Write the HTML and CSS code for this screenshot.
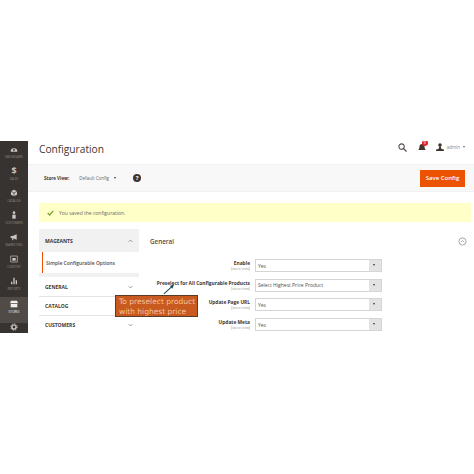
FILE: index.html
```html
<!DOCTYPE html>
<html lang="en">
<head>
    <meta charset="UTF-8">
    <title>Configuration</title>
    <link rel="stylesheet" href="styles.css">
</head>
<body>
    <div class="admin">
        <nav class="sidebar">
            <div class="nav-item">
                <svg viewBox="0 0 12 10"><path d="M1 9a5 5 0 0 1 10 0z" fill="#c9c6c3"/><circle cx="6" cy="6.5" r="1.4" fill="#373330"/></svg>
                <span>DASHBOARD</span>
            </div>
            <div class="nav-item">
                <span class="nav-glyph">$</span>
                <span>SALES</span>
            </div>
            <div class="nav-item">
                <svg viewBox="0 0 12 12"><path d="M6 1l4.5 2.5v5L6 11 1.500 8.500v-5z" fill="#c9c6c3"/><path d="M1.500 3.500L6 6l4.500-2.500M6 6v5" stroke="#373330" fill="none"/></svg>
                <span>CATALOG</span>
            </div>
            <div class="nav-item">
                <svg viewBox="0 0 12 12"><circle cx="6" cy="2.500" r="2" fill="#c9c6c3"/><path d="M3.500 5.500h5v6h-5z" fill="#c9c6c3"/></svg>
                <span>CUSTOMERS</span>
            </div>
            <div class="nav-item">
                <svg viewBox="0 0 12 12"><path d="M1 4.500h3L10 2v8L4 7.500H1z" fill="#c9c6c3"/><path d="M3 7.500h2V11H3.500z" fill="#c9c6c3"/></svg>
                <span>MARKETING</span>
            </div>
            <div class="nav-item">
                <svg viewBox="0 0 12 12"><path d="M1 1.500h10v9H1z" fill="none" stroke="#c9c6c3"/><path d="M3.500 4.500h5v4h-5z" fill="#c9c6c3"/></svg>
                <span>CONTENT</span>
            </div>
            <div class="nav-item">
                <svg viewBox="0 0 12 12"><path d="M1.500 7h2v4h-2zM5 1h2v10H5zM8.500 5h2v6h-2z" fill="#c9c6c3"/></svg>
                <span>REPORTS</span>
            </div>
            <div class="nav-item nav-active">
                <svg viewBox="0 0 12 10"><path d="M1.500 0h9L12 4H0z" fill="#f1efed"/><path d="M1 5h10v5H1z" fill="#f1efed"/></svg>
                <span>STORES</span>
            </div>
            <div class="nav-item nav-last">
                <svg viewBox="0 0 12 12"><circle cx="6" cy="6" r="3.200" fill="none" stroke="#c9c6c3" stroke-width="2.200"/><circle cx="6" cy="6" r="5" fill="none" stroke="#c9c6c3" stroke-width="1.400" stroke-dasharray="1.600 2.300"/></svg>
                <span>SYSTEM</span>
            </div>
        </nav>

        <main class="main">
            <header class="page-head">
                <h1>Configuration</h1>
                <div class="head-tools">
                    <svg class="icon-search" viewBox="0 0 10 10"><circle cx="4" cy="4" r="3" fill="none" stroke="#514b47" stroke-width="1.200"/><path d="M6.200 6.200L9.500 9.500" stroke="#514b47" stroke-width="1.400"/></svg>
                    <div class="bell">
                        <svg viewBox="0 0 8 8"><path d="M0 7q1.500-1 1.500-3.500a2.500 2.500 0 0 1 5 0Q6.500 6 8 7z" fill="#41362f"/></svg>
                        <span class="bell-count">9</span>
                    </div>
                    <div class="user">
                        <svg viewBox="0 0 8 8"><circle cx="4" cy="2" r="1.800" fill="#41362f"/><path d="M3 3.500h2V5.500l3 1.200V8H0V6.700l3-1.200z" fill="#41362f"/></svg>
                        <span>admin</span>
                        <i class="caret"></i>
                    </div>
                </div>
            </header>

            <div class="store-bar">
                <span class="store-label">Store View:</span>
                <span class="store-value">Default Config</span>
                <i class="caret caret-dark"></i>
                <span class="help">?</span>
                <button class="btn-save">Save Config</button>
            </div>

            <div class="notice">
                <svg viewBox="0 0 10 8"><path d="M1 4l2.800 2.800L9 1" fill="none" stroke="#79a22e" stroke-width="1.800"/></svg>
                <span>You saved the configuration.</span>
            </div>

            <div class="columns">
                <aside class="tabs">
                    <div class="tab tab-open">
                        <span>MAGEANTS</span>
                        <svg class="chev" viewBox="0 0 8 5"><path d="M1 4l3-3 3 3" fill="none" stroke="#6b6661"/></svg>
                    </div>
                    <div class="tab-link"><span>Simple Configurable Options</span></div>
                    <div class="tab tab-first">
                        <span>GENERAL</span>
                        <svg class="chev" viewBox="0 0 8 5"><path d="M1 1l3 3 3-3" fill="none" stroke="#6b6661"/></svg>
                    </div>
                    <div class="tab">
                        <span>CATALOG</span>
                        <svg class="chev" viewBox="0 0 8 5"><path d="M1 1l3 3 3-3" fill="none" stroke="#6b6661"/></svg>
                    </div>
                    <div class="tab">
                        <span>CUSTOMERS</span>
                        <svg class="chev" viewBox="0 0 8 5"><path d="M1 1l3 3 3-3" fill="none" stroke="#6b6661"/></svg>
                    </div>
                </aside>

                <section class="form">
                    <div class="form-head">
                        <h2>General</h2>
                        <svg viewBox="0 0 10 10"><circle cx="5" cy="5" r="4" fill="none" stroke="#8a8683" stroke-width=".8"/><path d="M3 6l2-2 2 2" fill="none" stroke="#8a8683" stroke-width=".8"/></svg>
                    </div>
                    <div class="field">
                        <div class="field-label"><b>Enable</b><small>[store view]</small></div>
                        <div class="select"><span>Yes</span><i class="select-btn"></i></div>
                    </div>
                    <div class="field">
                        <div class="field-label"><b>Preselect for All Configurable Products</b><small>[store view]</small></div>
                        <div class="select"><span>Select Highest Price Product</span><i class="select-btn"></i></div>
                    </div>
                    <div class="field">
                        <div class="field-label"><b>Update Page URL</b><small>[store view]</small></div>
                        <div class="select"><span>Yes</span><i class="select-btn"></i></div>
                    </div>
                    <div class="field">
                        <div class="field-label"><b>Update Meta</b><small>[store view]</small></div>
                        <div class="select"><span>Yes</span><i class="select-btn"></i></div>
                    </div>
                </section>
            </div>
        </main>

        <svg class="callout-arrow" viewBox="0 0 14 12"><path d="M1 11L11 2" stroke="#1d4a5c" stroke-width="1.200"/><path d="M13 0L8 2l3 3z" fill="#1d4a5c"/></svg>
        <div class="callout">To preselect product<br>with highest price</div>
    </div>
</body>
</html>
```

FILE: styles.css
```css
body {
    margin: 0;
    background: #fff;
    font-family: 'Open Sans', sans-serif;
    color: #41362f;
}

.admin {
    position: relative;
    display: flex;
    height: 192px;
    margin-top: 141px;
    overflow: hidden;
}

/* left menu */
.sidebar {
    flex: 0 0 28px;
    background: #373330;
    display: flex;
    flex-direction: column;
}

.nav-item {
    height: 22px;
    flex: none;
    box-sizing: border-box;
    padding-top: 4px;
    display: flex;
    flex-direction: column;
    align-items: center;
    gap: 2px;
    font-size: 3px;
    line-height: 4px;
    color: #8f8b86;
}

.nav-item svg {
    width: 8px;
    height: 8px;
}

.nav-glyph {
    height: 8px;
    font-size: 9px;
    line-height: 8px;
    font-weight: 700;
    color: #c9c6c3;
}

.nav-active {
    height: 26px;
    margin-top: 2px;
    padding-top: 3px;
    background: #514b47;
    color: #f1efed;
}

.nav-last {
    padding-top: 0;
}

/* header */
.main {
    flex: 1;
    min-width: 0;
}

.page-head {
    height: 23px;
    box-sizing: border-box;
    padding: 0 0 7px 11px;
    display: flex;
    align-items: center;
    justify-content: space-between;
}

.page-head h1 {
    margin: 0;
    font-size: 10.200px;
    font-weight: 400;
    color: #41362f;
}

.head-tools {
    display: flex;
    align-items: center;
    padding-right: 9px;
    margin-bottom: 4px;
}

.icon-search {
    width: 9px;
    height: 9px;
    margin-right: 11px;
}

.bell {
    position: relative;
    width: 8px;
    height: 8px;
    margin-right: 10px;
}

.bell svg {
    display: block;
    width: 8px;
    height: 8px;
}

.bell-count {
    position: absolute;
    top: -3px;
    left: 4px;
    width: 6px;
    height: 6px;
    border-radius: 50%;
    background: #e22626;
    color: #fff;
    font-size: 4px;
    line-height: 6px;
    text-align: center;
}

.user {
    display: flex;
    align-items: center;
    gap: 3px;
    font-size: 4.500px;
    color: #8a8683;
}

.user svg {
    width: 8px;
    height: 8px;
}

.caret {
    border: 1.500px solid transparent;
    border-top: 2px solid #6b6661;
    border-bottom: 0;
}

.caret-dark {
    border-top-color: #41362f;
    margin-left: 5px;
}

/* store view bar */
.store-bar {
    height: 28px;
    background: #f8f8f8;
    border-top: 1px solid #f1f1f1;
    border-bottom: 1px solid #f1f1f1;
    box-sizing: border-box;
    display: flex;
    align-items: center;
    padding: 0 9px 0 16px;
    font-size: 4.500px;
}

.store-label {
    font-weight: 700;
    margin-right: 10px;
}

.store-value {
    color: #6b6661;
}

.help {
    width: 8px;
    height: 8px;
    margin-left: 17px;
    border-radius: 50%;
    background: #41362f;
    color: #f8f8f8;
    font-size: 6px;
    font-weight: 700;
    line-height: 8px;
    text-align: center;
}

.btn-save {
    margin-left: auto;
    width: 45px;
    height: 17px;
    padding: 0;
    border: none;
    background: #eb5202;
    color: #fff;
    font-family: inherit;
    font-size: 6px;
    font-weight: 600;
}

/* message */
.notice {
    height: 19px;
    margin: 11px 3px 0 11px;
    background: #ffffc8;
    display: flex;
    align-items: center;
    padding-left: 8px;
    font-size: 5px;
    color: #6b6661;
}

.notice svg {
    width: 7px;
    height: 6px;
    margin-right: 5px;
}

/* two columns under the message */
.columns {
    display: flex;
    margin: 7px 0 0 11px;
}

.tabs {
    flex: 0 0 100px;
}

.tab {
    height: 19px;
    box-sizing: border-box;
    display: flex;
    align-items: center;
    justify-content: space-between;
    padding: 0 6px;
    border-bottom: 1px solid #e3e3e3;
    font-size: 5px;
    font-weight: 700;
}

.tab-open {
    height: 23px;
    background: #f1f1f1;
    border-bottom: 0;
}

.tab-first {
    height: 24px;
    border-top: 4px solid #f1f1f1;
}

.chev {
    width: 5px;
    height: 4px;
}

.tab-link {
    height: 21px;
    box-sizing: border-box;
    padding-left: 3px;
    margin-left: 3px;
    border-left: 1px solid #eb5202;
    display: flex;
    align-items: center;
    font-size: 5px;
    font-weight: 600;
    color: #514b47;
}

/* form */
.form {
    flex: 1;
    margin-left: 11px;
}

.form-head {
    height: 30px;
    box-sizing: border-box;
    padding: 0 7px 6px 0;
    display: flex;
    align-items: center;
    justify-content: space-between;
}

.form-head h2 {
    margin: 0;
    font-size: 6.300px;
    font-weight: 600;
    color: #514b47;
}

.form-head svg {
    width: 9px;
    height: 9px;
}

.field {
    height: 19.700px;
    display: flex;
    gap: 5px;
}

.field-label {
    flex: 0 0 100px;
    text-align: right;
    line-height: 5px;
    white-space: nowrap;
}

.field-label b {
    display: block;
    font-size: 4.850px;
    font-weight: 700;
    line-height: 6px;
    padding-top: 1px;
}

.field-label small {
    display: block;
    font-size: 3.500px;
    color: #9a9693;
}

.select {
    flex: 0 0 127px;
    height: 13px;
    box-sizing: border-box;
    border: 1px solid #d5d5d5;
    background: #fff;
    display: flex;
    align-items: center;
    justify-content: space-between;
    padding-left: 2px;
    font-size: 5px;
    color: #514b47;
}

.select-btn {
    position: relative;
    width: 12px;
    height: 100%;
    background: #e3e3e3;
}

.select-btn::after {
    content: "";
    position: absolute;
    top: 4px;
    left: 4px;
    border: 1.500px solid transparent;
    border-top: 2px solid #41362f;
    border-bottom: 0;
}

/* annotation over the form */
.callout {
    position: absolute;
    left: 115px;
    top: 154px;
    width: 83px;
    height: 22px;
    box-sizing: border-box;
    padding: 1px 3px;
    background: #c8591f;
    border: 1px solid #5b3a27;
    color: #f6c49c;
    font-family: 'DejaVu Sans', sans-serif;
    font-size: 7.500px;
    line-height: 9.500px;
    white-space: nowrap;
}

.callout-arrow {
    position: absolute;
    left: 163px;
    top: 143px;
    width: 12px;
    height: 11px;
}
```
